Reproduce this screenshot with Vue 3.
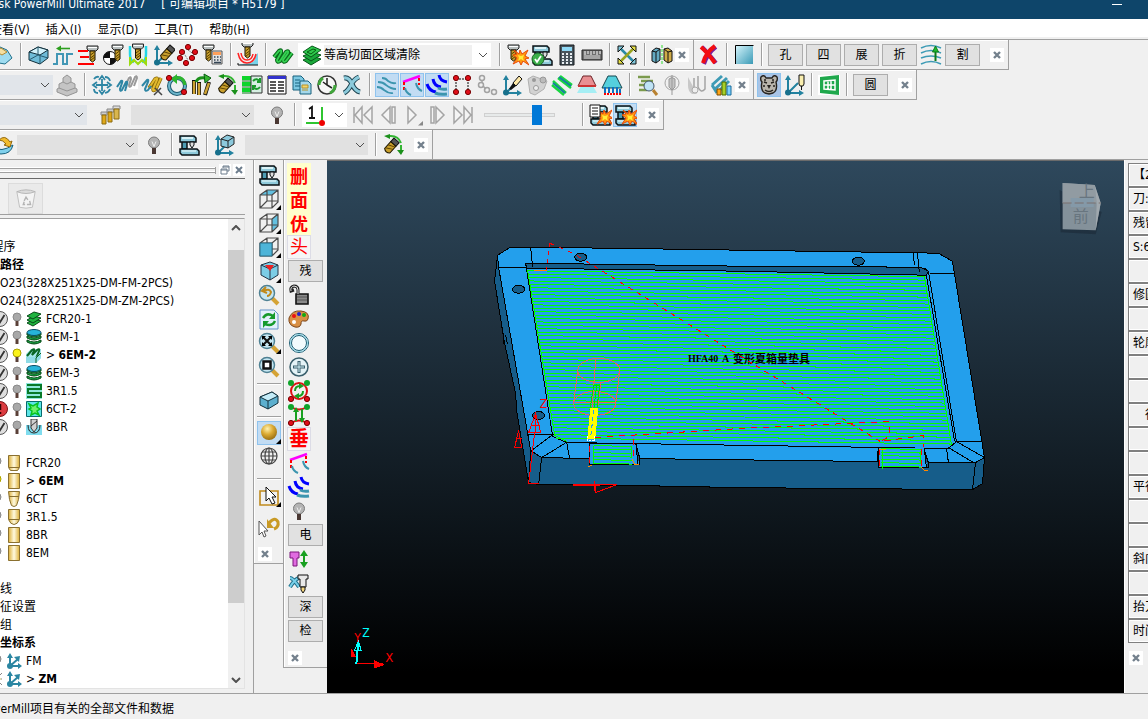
<template>
  <div class="window">
    <header class="title-bar">
      <span>Autodesk PowerMill Ultimate 2017</span>
      <span class="title-project">[ 可编辑项目 * H5179 ]</span>
      <button type="button" class="minimize" aria-label="最小化"></button>
    </header>

    <nav class="menu-bar">
      <button v-for="menu in menus" :key="menu" type="button">{{ menu }}</button>
    </nav>

    <div v-for="(row, r) in toolbarRows" :key="r" class="toolbar-row">
      <div v-for="(bar, b) in row" :key="b" class="toolbar">
        <template v-for="(item, i) in bar" :key="i">
          <button
            v-if="item.icon"
            type="button"
            class="tool"
            :class="{ 'is-on': item.on }"
            :aria-label="item.icon"
          >
            <svg viewBox="0 0 24 24" v-html="icons[item.icon]"></svg>
          </button>
          <i v-else-if="item.sep" class="sep"></i>
          <i v-else-if="item.space !== undefined" :style="{ width: `${item.space}px` }"></i>
          <button v-else-if="item.text" type="button" class="text-tool">{{ item.text }}</button>
          <button v-else-if="item.close" type="button" class="close" aria-label="关闭">
            <svg viewBox="0 0 14 14" v-html="closeMark"></svg>
          </button>
          <input
            v-else-if="item.slider"
            v-model="speed"
            type="range"
            class="slider"
            aria-label="仿真速度"
          />
          <div
            v-else
            class="combo"
            :class="`combo-${item.combo}`"
            :style="{ width: `${item.width}px` }"
          >
            <svg v-if="item.mark" class="combo-mark" viewBox="0 0 24 24" v-html="icons[item.mark]"></svg>
            <select :aria-label="item.name">
              <option>{{ item.value }}</option>
            </select>
            <svg class="chevron" viewBox="0 0 10 6"><path d="M1 1l4 4 4-4" /></svg>
          </div>
        </template>
      </div>
    </div>

    <main class="workspace">
      <aside class="explorer">
        <div class="explorer-head">
          <i class="grip"></i>
          <button type="button" class="dock" aria-label="浮动">
            <svg viewBox="0 0 12 12">
              <path d="M4 4v-2h6v5h-2M4 3h6M2 5h6v5h-6zM2 6h6" />
            </svg>
          </button>
          <button type="button" class="dock" aria-label="关闭">
            <svg viewBox="0 0 12 12"><path class="cross" d="M3 3l6 6M9 3l-6 6" /></svg>
          </button>
        </div>
        <div class="explorer-tools">
          <button type="button" class="bin-button" aria-label="回收站">
            <svg viewBox="0 0 24 24">
              <path d="M2 4l3 17q7 2 14 0l3-17" fill="#f4f4f4" stroke="#bcbcbc" />
              <path d="M2 4q10-4 20 0q-10 4-20 0z" fill="#dcdcdc" stroke="#b4b4b4" />
              <path d="M10 14l2-4 2 3M16 14l1 4h-4M11 18h-2l1-3" fill="none" stroke="#b4b4b4" stroke-width="1.500" />
            </svg>
          </button>
        </div>
        <div class="tree-frame">
          <ul class="tree">
            <li v-for="(node, n) in tree" :key="n" :class="node.kind">
              <svg v-if="node.status" class="status-mark" viewBox="0 0 16 16" v-html="marks[node.status]"></svg>
              <svg v-if="node.bulb" class="bulb-mark" viewBox="0 0 10 16" v-html="marks[node.bulb]"></svg>
              <svg v-if="node.mark" class="node-mark" viewBox="0 0 16 16" v-html="marks[node.mark]"></svg>
              <span v-if="node.active">&gt; <b>{{ node.label }}</b></span>
              <span v-else>{{ node.label }}</span>
            </li>
          </ul>
          <div class="scrollbar">
            <button type="button" class="scroll-up" aria-label="向上">
              <svg viewBox="0 0 10 6"><path d="M1 5l4-4 4 4" /></svg>
            </button>
            <i class="scroll-thumb"></i>
            <i class="scroll-rest"></i>
            <button type="button" class="scroll-down" aria-label="向下">
              <svg viewBox="0 0 10 6"><path d="M1 1l4 4 4-4" /></svg>
            </button>
          </div>
        </div>
      </aside>

      <div class="side-bars">
        <div v-for="(bar, b) in sideBars" :key="b" class="side-bar" :class="`side-${b}`">
          <template v-for="(item, i) in bar" :key="i">
            <button
              v-if="item.icon"
              type="button"
              class="tool"
              :class="{ 'is-on': item.on }"
              :aria-label="item.icon"
            >
              <svg viewBox="0 0 24 24" v-html="icons[item.icon]"></svg>
            </button>
            <button
              v-else-if="item.glyph"
              type="button"
              class="glyph-tool"
              :class="item.tone"
            >{{ item.glyph }}</button>
            <i v-else-if="item.sep" class="sep-line"></i>
            <i v-else-if="item.space" :style="{ height: `${item.space}px` }"></i>
            <button v-else-if="item.text" type="button" class="text-tool">{{ item.text }}</button>
            <button v-else type="button" class="close" aria-label="关闭">
              <svg viewBox="0 0 14 14" v-html="closeMark"></svg>
            </button>
          </template>
        </div>
      </div>

      <section class="viewport">
        <svg class="scene" viewBox="327 161 797 531" preserveAspectRatio="xMidYMid slice">
          <g shape-rendering="crispEdges" stroke="#000" stroke-width="1" fill="none">
            <!-- dark sides of the plate -->
            <path
              d="M498 255L495 281L505 343L516 393L517 410L529 482L539 484L640 485L740 487L972 489L982 483L984 457L952 300z"
              fill="#165d8a"
            />
            <!-- top face -->
            <path
              d="M498 255L511 247L607 248L938 253L952 261L984 457L975 462L928 462L923 447L878 447L877 461L640 458L636 443L590 443L590 458L542 457L531 450L499 267z"
              fill="#239fec"
            />
            <path d="M531 450L529 482M542 457L539 484M975 462L972 489" />
            <!-- pocket -->
            <path d="M526 263L553 264L740 266L900 267L925 268L928 271L956 441L948 448L567 442L553 436z" fill="#239fec" />
            <path d="M526 263L740 266L920 267L928 271L926 275L740 271L527 268z" fill="#165d8a" />
            <path d="M926 275L954 440" />
            <path d="M531 247L533 267M499 267H526M913 253L914 265M917 253L919 272M930 273H954" />
            <path d="M527 434H553L532 450M565 443L542 457M567 442L570 458M955 441H982M956 441L984 457M948 447L973 462M946 447L948 462" />
            <!-- clamp slots -->
            <path d="M590 443H636L639 463L590 464z" fill="#239fec" stroke="none" />
            <path d="M590 444V464H640V458M636 443L638 463" />
            <path d="M878 447H923L927 467L878 467z" fill="#239fec" stroke="none" />
            <path d="M878 447V467H928V462M924 448L926 467" />
            <path d="M506 335l2 9M504 333v11" />
            <ellipse v-for="hole in holes" :key="hole.x" :cx="hole.x" :cy="hole.y" rx="6" ry="4" fill="#165d8a" />
          </g>

          <g shape-rendering="crispEdges" stroke="#0f0" stroke-width="1" fill="none">
            <path :d="rasterPath" />
            <path d="M528 270L555 435L567 441M924 276L951 444" />
            <path :d="slotPath" />
          </g>

          <text class="engraving latin" x="688" y="362">HFA40</text>
          <text class="engraving latin" x="722" y="362">A</text>
          <text class="engraving" x="733" y="363">变形夏箱量垫具</text>

          <g shape-rendering="crispEdges" fill="none" stroke="#f00">
            <path stroke-dasharray="4 4" d="M550 243L547 270" />
            <path stroke-dasharray="5 5" d="M550 243L575 254L757 366L880 441" />
            <path stroke-dasharray="6 6" d="M595 437L740 428L889 421V436L880 441L923 435V446" />
            <path stroke-dasharray="6 5" d="M590 445V462M634 438V457M879 448V466M921 448V466" />
            <path stroke="#f80" d="M534 270H547M632 458l3 6h4M588 466l4-1M879 449h7M921 467l3 3h4" />
          </g>

          <!-- cutter with its holder -->
          <g shape-rendering="crispEdges" fill="none">
            <g stroke="#dd6a5c">
              <ellipse cx="599" cy="370" rx="21" ry="12" />
              <ellipse cx="595" cy="403" rx="21" ry="12" />
              <path d="M578 370L574 402M620 370L616 402M596 358L592 415M575 402H616M601 382L597 415" />
            </g>
            <path stroke="#0d0" d="M594 385L590 410M600 384L597 410M597 384L594 410M594 385H600" />
            <path fill="#ff0" stroke="#ff0" d="M591 408H598L595 438H588z" />
            <path stroke="#fff" stroke-dasharray="2 1" d="M588 435V440H595V435" />
            <path stroke="#239fec" stroke-dasharray="4 3" d="M594 410L591 436" />
          </g>

          <!-- workplane axes -->
          <g shape-rendering="crispEdges" fill="none" stroke="#f00">
            <path d="M536 413L529 432H541zM536 413V432M531 425H540M535 432L529 483H539" />
            <path d="M519 430L515 447H522zM516 438H522" />
            <path d="M573 484H617L596 492L595 480M595 484V490" />
            <path d="M573 484H600" stroke-width="2" />
          </g>
          <text class="axis red" x="540" y="408">Z</text>

          <!-- view triad -->
          <g shape-rendering="crispEdges" fill="none">
            <path stroke="#f00" d="M357 663H384" />
            <path fill="#f00" stroke="#f00" d="M375 660L384 664L375 667zM352 648l4 8h-4z" />
            <path stroke="#0ff" stroke-width="2" d="M357 663L359 642" />
            <path stroke="#0ff" d="M359 640L355 650H362z" />
          </g>
          <text class="axis cyan" x="363" y="636">Z</text>
          <text class="axis red" x="355" y="641">Y</text>
          <text class="axis red wide" x="386" y="661">X</text>

          <!-- view cube -->
          <g>
            <path d="M1059 190L1060 232L1095 234L1101 212z" fill="#101b24" opacity=".35" />
            <path d="M1062 183L1094 185L1100 203L1095 230L1062 229z" fill="#84919a" />
            <path d="M1062 183L1094 185L1096 203H1062z" fill="#919ba2" />
            <path d="M1094 185L1100 203L1095 230L1096 203z" fill="#a0a8ae" />
            <path d="M1070 198h23v9h-23z" fill="#8499a8" />
            <path d="M1062 203h38" stroke="#7a716e" stroke-dasharray="9 3" />
            <text class="cube-text" x="1078" y="197">上</text>
            <text class="cube-text" x="1072" y="222">前</text>
          </g>
        </svg>
      </section>

      <aside class="macro-panel">
        <div class="macro-list">
          <button v-for="(macro, m) in macros" :key="m" type="button">{{ macro }}</button>
        </div>
        <button type="button" class="close" aria-label="关闭">
          <svg viewBox="0 0 14 14" v-html="closeMark"></svg>
        </button>
      </aside>
    </main>

    <footer class="status-bar">PowerMill项目有关的全部文件和数据</footer>
  </div>
</template>

<script setup>
import { ref } from 'vue'

const speed = ref(79)

const menus = ['查看(V)', '插入(I)', '显示(D)', '工具(T)', '帮助(H)']

const closeMark = '<path d="M4 4l6 6M10 4l-6 6" stroke="#74818d" stroke-width="2.400"/>'

// shared fragments
const cutter = (x, y) => `<g transform="translate(${x} ${y})">
  <path d="M0 0h11v3l-2 2h-7l-2-2z" fill="#b9c0c0" stroke="#222"/>
  <path d="M1 1.500h9" stroke="#fff"/>
  <path d="M3 5h5v9l-2.500 2-2.500-2z" fill="#c99f2c" stroke="#1a1400"/>
  <path d="M3.500 9l4-3M3.500 12l4-3M4 14l4-3" stroke="#5a4200"/></g>`
const tilted = (x, y) => `<g transform="translate(${x} ${y}) rotate(42)">
  <path d="M0 0h7v5h-7z" fill="#555" stroke="#111"/>
  <path d="M0 5h7v9q-3.500 3-7 0z" fill="#c99f2c" stroke="#1a1400"/>
  <path d="M0 9l7-3M0 13l7-4" stroke="#5a4200"/></g>`
const axes = `<path d="M6 20V5M5 20h15M6 20l10-10" stroke="#23829f" stroke-width="2" fill="none"/>
  <path d="M6 2l3 5h-6zM22 20l-5-3v6z" fill="#23829f"/><circle cx="6" cy="19.500" r="3" fill="#17708c"/>`
const waveLine = 'M3 13L8 7q3-2 2 2L6 16q0 3 3 1L15 8q3-2 2 1L12 16q0 3 3 1L21 9'
const wave = (color) => `<path d="${waveLine}" fill="none" stroke="${color}" stroke-width="2"/>`
const flame = (x, y) => `<g transform="translate(${x} ${y})"><path d="M-2-2l5 4 1-4 2 4 6-4-3 6 4 2-4 1 4 6-6-4-2 4-2-4-6 3 4-6-4-3 4-1z" fill="#ff9a10" stroke="#e8480a"/><path d="M2 3l3 1 3-1-1 3 1 3-3-2-3 2 1-3z" fill="#ffec3a"/></g>`
const machine = `<path d="M5 7h5v9h-5z" fill="#4d9cb3" stroke="#0a1114" stroke-width="1.500"/>
  <path d="M3 3h14l2 2v4h-16z" fill="#8fcadb" stroke="#0a1114" stroke-width="1.500"/>
  <path d="M5 5h11" stroke="#f4ffff" stroke-width="1.500"/>
  <path d="M13 9h4v3l-2 3-2-3z" fill="#ddd" stroke="#0a1114"/>
  <path d="M3 16h17l2 2v4h-17l-2-2z" fill="#8fcadb" stroke="#0a1114" stroke-width="1.500"/>
  <path d="M5 18h14" stroke="#f4ffff"/>`
const bulbGrey = `<circle cx="12" cy="9.500" r="5.500" fill="#b4b4b4" stroke="#7c7c7c"/><path d="M10 8.500l2 5 2-5" stroke="#eee" fill="none"/><path d="M10 15h4v6h-4z" fill="#4a3833"/>`
const cubeLines = '<path d="M3 8l7-5h11v12l-6 6h-12zM3 8h12v13M15 8l6-5M10 3v11l-7 7M10 14h11" fill="none" stroke="#4a4a4a" stroke-width="1.200"/>'
const magnifier = `<path d="M14 14l7 7" stroke="#d5a335" stroke-width="4"/><circle cx="10" cy="10" r="7.500" fill="#c5e6f2" stroke="#4f8193" stroke-width="1.500"/>`
const redDots = (points) => points.map(([x, y]) => `<circle cx="${x}" cy="${y}" r="2.600" fill="#e00d18" stroke="#700"/>`).join('')

const icons = {
  model: '<path d="M2 8l7-4 7 3 5 8-7 6-12-2z" fill="#9fdcf0" stroke="#1f6f8a"/><path d="M4 8l6-3 6 4-5 3z" fill="#f5dfa0" stroke="#b58a30"/>',
  block: '<path d="M3 9l9-5 10 3v8l-8 6-11-4z" fill="#6fbcd8" stroke="#12303c"/><path d="M3 9l11 3 8-5-10-3z" fill="#d2f2fb" stroke="#12303c"/><path d="M14 12v9M12 4v8l-9 5M12 12l10 3" fill="none" stroke="#275a6e"/>',
  rapid: '<path d="M2 21h4v-10h6v10h4v-10h6" fill="none" stroke="#4297b5" stroke-width="2"/><path d="M9 5.500h10" stroke="#2c9f1e" stroke-width="1.600"/><path d="M5 5.500l5-3v6z" fill="#2c9f1e"/>',
  feeds: `<path d="M2 8h10M4 14h9M2 21h16" stroke="#f00" stroke-width="2"/>${cutter(11, 3)}`,
  startPoint: `<circle cx="9" cy="15" r="6.500" fill="#fff" stroke="#111"/><path d="M9 15V8.500a6.500 6.500 0 0 0-6.500 6.500zM9 15v6.500a6.500 6.500 0 0 0 6.500-6.500z" fill="#111"/>${cutter(11, 2)}`,
  leads: `<path d="M4 3v15M20 3v15" stroke="#f22" stroke-width="1.500"/><path d="M4 3v8q0 7 4 8M20 3v8q0 7-4 8" fill="none" stroke="#23d6e8" stroke-width="2.500"/><path d="M4 14v7l4-4 4 4 4-4 4 4v-7" fill="none" stroke="#9bdc10" stroke-width="2"/>${cutter(6.500, 1)}`,
  toolAxis: `${axes}${tilted(19, 2)}`,
  points: `<path d="M6 7l6 10M12 7l7 5" stroke="#777" stroke-dasharray="2 1"/><g>${redDots([[12, 4], [6, 9], [19, 9], [4, 15], [10, 20], [16, 15]])}</g>`,
  toolCalc: `${cutter(2, 2)}<path d="M11 8h10v13h-10z" fill="#e3e3e3" stroke="#555"/><path d="M12 9h8v3h-8z" fill="#ffa05a"/><path d="M13 14h1.500M16 14h1.500M19 14h1M13 17h1.500M16 17h1.500M19 17h1M13 19.500h7" stroke="#345" stroke-width="1.500"/>`,
  toolpathCheck: `<path d="M13 20q7-1 6-7l3-3v12h-20z" fill="#78d3ea"/><path d="M2 10q2 10 9 10t9-9M5 10q1 7 6 7t6-6" fill="none" stroke="#f22" stroke-width="1.500"/><path d="M2 20v2h20" stroke="#111" fill="none"/>${cutter(6, -1)}`,
  greenWave: `<path d="${waveLine}" transform="translate(0 1)" fill="none" stroke="#0b6a1c" stroke-width="4"/><path d="${waveLine}" transform="translate(0 1)" fill="none" stroke="#35d252" stroke-width="1.800"/>`,
  layers: '<g stroke="#07551a" fill="#1aa93a"><path d="M3 17l8 5 10-6-9-3z"/><path d="M3 13l8 5 10-6-9-3z"/><path d="M3 9l8 5 10-7-9-4z" fill="#2ec94c"/></g><path d="M7 9l6-3 3 1-5 4z" fill="none" stroke="#075c12"/>',
  toolCollide: `${cutter(3, 2)}${flame(11, 9)}`,
  machineOk: `${machine}<circle cx="8" cy="16" r="6" fill="#3caf4a" stroke="#186a24"/><path d="M5 16l2 3 4-6" fill="none" stroke="#fff" stroke-width="1.800"/>`,
  calculator: '<path d="M5 2h14v20h-14z" fill="#49545c" stroke="#15191c"/><path d="M7 4h10v4h-10z" fill="#8fd8f5"/><path d="M7 11h2M11 11h2M15 11h2M7 14h2M11 14h2M15 14h2M7 17h2M11 17h2M15 17h2M7 20h2M11 20h2M15 20h2" stroke="#e8eef2" stroke-width="2"/>',
  ruler: '<path d="M2 7h20v10h-20z" fill="#6f6f6f" stroke="#222"/><path d="M4 12h16v4h-16z" fill="#a5a5a5"/><path d="M5 8v4M8 8v3M11 8v4M14 8v3M17 8v4M20 8v3" stroke="#fff"/>',
  expand: '<path d="M5 5l14 14" stroke="#2b8aa4" stroke-width="2.500"/><path d="M19 5l-14 14" stroke="#9ba520" stroke-width="2.500"/><path d="M3 3h6l-6 6zM21 21h-6l6-6z" fill="#7fc5d8" stroke="#111"/><path d="M21 3h-6l6 6zM3 21h6l-6-6z" fill="#e6df45" stroke="#111"/>',
  mirror: '<path d="M2 8l4-3 4 1v11l-4 3-4-2z" fill="#63aac2" stroke="#111"/><path d="M2 8l4 1 4-3M6 9v11" stroke="#111" fill="none"/><path d="M22 8l-4-3-4 1v11l4 3 4-2z" fill="#d0ac48" stroke="#111"/><path d="M22 8l-4 1-4-3M18 9v11" stroke="#111" fill="none"/><path d="M12 2v20" stroke="#3d3" stroke-dasharray="3 1"/>',
  redCross: '<path d="M5 4q6 6 14 16M19 4q-8 6-12 17" stroke="#7a1fa0" stroke-width="4" fill="none"/><path d="M4 4q6 5 14 16M18 3q-9 6-12 17" stroke="#f20d12" stroke-width="4" fill="none"/>',
  plane: '<defs><linearGradient id="plane" x1="0" y1="0" x2="1" y2="1"><stop offset="0" stop-color="#d3f3fa"/><stop offset="1" stop-color="#3a9ab6"/></linearGradient></defs><path d="M4 3h17v18h-17z" fill="url(#plane)"/><path d="M3.500 21v-18.500h18" fill="none" stroke="#000"/>',
  surface: '<path d="M2 5q10-5 20 0M2 10q10-5 20 0M2 15q10-4 20 0M2 21q10-5 20 0" fill="none" stroke="#3d9bb5" stroke-width="1.600"/><path d="M16.500 18v-11" stroke="#0a7a18" stroke-width="2"/><path d="M16.500 3l3 6h-6z" fill="#1dbb2f" stroke="#0a7a18"/>',
  pyramid: '<g fill="#c4c4c4" stroke="#949494"><path d="M2 16l10-5 10 5v3l-10 4-10-4z"/><path d="M4 11l8-4 8 4v4l-8 3-8-3z"/><path d="M8 5l4-3 4 3v4l-4 2-4-2z"/></g>',
  transform: '<g fill="none" stroke="#2e86a4" stroke-width="1.800"><path d="M12 6v12M6 12h12M9 7l3-4 3 4M9 17l3 4 3-4M7 9l-4 3 4 3M17 9l4 3-4 3"/><path d="M4 6q2-3 5-2M15 4q4 0 5 4M4 16q0 4 4 4M15 20q4-1 5-4"/></g>',
  waveCopy: '<path d="M13 2h10v14h-10z" fill="#fff"/><path d="M10 13l4-8q2-2 2 1l-2 6q0 3 2 1l4-9q2-2 2 1l-3 8" fill="none" stroke="#9a9a9a" stroke-width="2"/><path d="M2 14l4-6q2-1 1 2l-2 6q0 3 2 1l4-8q2-1 1 2l-2 7" fill="none" stroke="#2e86a4" stroke-width="2"/>',
  waveCut: '<path d="M9 15l6-9q3-2 2 1l-4 9q0 3 3 0l5-11" fill="none" stroke="#8a6a08" stroke-width="3.500"/><path d="M9 15l6-9q3-2 2 1l-4 9q0 3 3 0l5-11" fill="none" stroke="#e3ba2f" stroke-width="2"/><path d="M2 13l5-6q2-1 1 2l-3 7q0 3 3 1l3-4" fill="none" stroke="#2e86a4" stroke-width="2"/><path d="M15 15l7 7M21 15l-7 7" stroke="#444" stroke-width="1.500"/>',
  reorder: `<circle cx="12" cy="13" r="8" fill="none" stroke="#1d5a70" stroke-width="4"/><circle cx="12" cy="13" r="8" fill="none" stroke="#6cb6cc" stroke-width="2"/><path d="M10 6q8-4 10 6" fill="none" stroke="#2cb52c" stroke-width="3"/><path d="M12 1v10l-6-5z" fill="#2cb52c"/>${redDots([[4, 5], [19, 19]])}`,
  reverseTool: '<path d="M4 7v14M9 9v13M19 9l-4 13" stroke="#111" stroke-width="4"/><path d="M4 8v13M9 10v12M19 10l-4 11" stroke="#cda233" stroke-width="2.500"/><path d="M6 9q2-5 9-4" fill="none" stroke="#1b901b" stroke-width="3"/><path d="M14 1l7 4-6 5z" fill="#35b52f" stroke="#075c12"/>',
  spinTool: `${tilted(13, 5)}<path d="M8 3q9-1 12 7M20 12v6" fill="none" stroke="#34b534" stroke-width="2"/><path d="M3 3l6-2v5zM16 17h7l-3 5z" fill="#1b901b"/>`,
  refreshPath: '<path d="M2 5h13M2 11h13M2 17h13" stroke="#0fd42c" stroke-width="4"/><path d="M2 8h9M2 14h9M2 20h9" stroke="#0b7f1d"/><path d="M11 3h11v17h-11z" fill="#d6efe2" stroke="#333"/><path d="M13 8q4-4 7 1M20 14q-3 4-7 0M20 5v4h-3M13 17v-4h3" fill="none" stroke="#1a9a2c" stroke-width="2"/>',
  list: '<path d="M3 3h18v18h-18z" fill="#fff" stroke="#111"/><path d="M3 4.500h18" stroke="#33c" stroke-width="3"/><path d="M5 9h6M13 9h6M5 12h6M13 12h6M5 15h6M13 15h6M5 18h6M13 18h6" stroke="#222" stroke-width="1.500"/>',
  copy: '<path d="M3 3h8l3 3v11h-11z" fill="#7cc8e2" stroke="#16607c"/><path d="M5 7h5M5 10h5M5 13h5" stroke="#16607c"/><path d="M10 8h8l3 3v10h-11z" fill="#a5d8ea" stroke="#16607c"/><path d="M12 12h6v3h-6zM12 17h6" fill="#f2d56b" stroke="#b8922b"/>',
  clock: '<circle cx="12" cy="12" r="9" fill="#f6f6f6" stroke="#333" stroke-width="1.500"/><path d="M12 5v7l5 3M12 12l-4-3" fill="none" stroke="#222" stroke-width="1.500"/><path d="M4 12a9 9 0 0 1 4-7M20 12a9 9 0 0 1-5 8" fill="none" stroke="#3fa53a" stroke-width="3"/>',
  deleteX: '<path d="M4 5q5-1 8 6t8 8M19 4q-5 2-8 8t-7 8" fill="none" stroke="#193f4c" stroke-width="5"/><path d="M4 5q5-1 8 6t8 8M19 4q-5 2-8 8t-7 8" fill="none" stroke="#8ccbdc" stroke-width="3"/>',
  curves: '<path d="M2 14q4 0 7 3 5 4 9 3M3 9q5 0 8 3 5 4 10 4M7 5q4 0 6 3 4 3 8 2" fill="none" stroke="#3c95af" stroke-width="1.800"/>',
  leadLinks: '<path d="M3 9l17-6" stroke="#f0f" stroke-width="2.500"/><path d="M4 9v9M19 5v7" stroke="#f00" stroke-width="2" stroke-dasharray="3 2"/><path d="M5 15q1 5 6 7M16 10q1 6 6 8" fill="none" stroke="#3c95af" stroke-width="2"/>',
  arcs: '<path d="M2 11q2 7 9 8M8 6q1 7 8 8M14 2q1 6 8 7" fill="none" stroke="#00f" stroke-width="3"/><path d="M10 20q5 2 12 1M13 15q4 2 9 1" fill="none" stroke="#3c95af" stroke-width="3"/>',
  fourPoints: `<path d="M6 6h12M6 6v12M18 6v12" stroke="#555" stroke-width="1.500" stroke-dasharray="2 1"/>${redDots([[6, 5], [18, 5], [6, 19], [18, 19]])}`,
  chain: '<g fill="none" stroke="#a2a2a2" stroke-width="1.500"><circle cx="7" cy="5" r="2.500"/><circle cx="6" cy="12" r="2.500"/><circle cx="12" cy="17" r="2.500"/><circle cx="19" cy="19" r="2.500"/><path d="M7 7v3M8 13l3 3"/></g>',
  axisEdit: `${axes}<path d="M13 10l6-7 3 3-6 7z" fill="#ffe9a8" stroke="#111"/><path d="M9 16l4-6 3 3-5 4z" fill="#111"/>`,
  fan: '<path d="M3 6l5-3 14 5-3 8-9 6-5-2z" fill="#d2d2d2" stroke="#b0b0b0"/><circle cx="9" cy="7" r="2" fill="#999"/><circle cx="18" cy="7" r="3" fill="#bbb" stroke="#999"/><circle cx="11" cy="15" r="2.500" fill="#eee" stroke="#999"/>',
  greenBars: '<path d="M3 8l13 12M10 3l12 9M2 12l12 10M8 5l13 10" stroke="#18d640" stroke-width="2.500"/><path d="M3 10l12 10M9 4l12 9" stroke="#187fa0" stroke-width="2"/>',
  redTrap: '<path d="M6 13h12l4 7h-20z" fill="#a5eef4"/><path d="M8 3h8l5 10h-18z" fill="#e88f92" stroke="#6b2226"/><path d="M3 13h18" stroke="#c33" stroke-width="2"/>',
  blueTrap: '<path d="M8 3h8l6 12h-20z" fill="#55d0dd" stroke="#17464f"/><path d="M5 14v6M9 14v6M13 14v6M17 14v6M20 16v4" stroke="#0a71c2" stroke-width="2"/><path d="M4 21h17" stroke="#f00" stroke-width="2" stroke-dasharray="2 1"/>',
  searchPath: '<path d="M3 4h12M6 8h12M4 12h8M4 17h8" stroke="#7b9a4d" stroke-width="2.500"/><circle cx="14" cy="13" r="5" fill="#bfe3f5" stroke="#456"/><path d="M18 17l4 5" stroke="#b88130" stroke-width="3"/>',
  gauge: '<circle cx="12" cy="10" r="7" fill="none" stroke="#a5a5a5"/><path d="M12 2v20M9 6q3-3 6 0v8l-3 3-3-3z" fill="#c4c4c4" stroke="#999"/>',
  limits: '<path d="M3 4l9 17h-5q-4-3-4-8z" fill="#c8c8c8"/><path d="M9 5v12M13 3v11q3 7 7 2v-13" fill="none" stroke="#a4a4a4" stroke-width="1.500"/><circle cx="10" cy="17" r="3" fill="#eee" stroke="#aaa"/>',
  stats: '<path d="M2 12l10-9M5 16l12-11M10 17l9-9M2 12l5 8" stroke="#3d9bb5" stroke-width="3"/><path d="M7 16h4v6h-4z" fill="#ffa61b" stroke="#7a4a00"/><path d="M12 9h4v13h-4z" fill="#a6d02a" stroke="#4f6b00"/><path d="M17 13h4v9h-4z" fill="#7cd1ff" stroke="#176a9a"/>',
  bear: '<path d="M1 1h22v22h-22z" fill="#a9c4e6"/><path d="M4 4q3-3 5 1h6q2-4 5-1 1 3-1 5 2 8-3 11l-4 1-4-1q-5-3-3-11-2-2-1-5z" fill="#b9b5ac" stroke="#26231f" stroke-width="1.400"/><path d="M7 9l3 1M17 9l-3 1M8 17q4 3 8 0M6 13h2M16 13h2M8 6v2M16 6v2" stroke="#26231f" fill="none" stroke-width="1.500"/><path d="M10 12h4l-2 4z" fill="#26231f"/>',
  axisTool: `${axes}<path d="M17 2h5v9l-1 2h-3l-1-2z" fill="#f8edae" stroke="#111"/><path d="M19.500 13v4" stroke="#111"/>`,
  sheet: '<path d="M1 2h22v20h-22z" fill="#fff"/><path d="M3 4l19-2v20l-19-2z" fill="#1fa84c"/><path d="M7 8l11-1v10l-11-1zM7 12h11M11 8v8M14 7v10" fill="none" stroke="#fff" stroke-width="1.500"/>',
  toolSet: '<path d="M2 9h6v3h-6z" fill="#ccc" stroke="#888"/><path d="M3 12h4v9h-4z" fill="#e0a818" stroke="#8a6a10"/><path d="M8 6h7v3h-7z" fill="#ccc" stroke="#888"/><path d="M9 9h4v10h-4z" fill="#e0a818" stroke="#8a6a10"/><path d="M14 3h7v3h-7z" fill="#ddd" stroke="#888"/><path d="M15 6h5v10h-5z" fill="#d9b64e" stroke="#8a6a10"/>',
  bulb: bulbGrey,
  numAxis: '<path d="M4 20h13M20 4v14" stroke="#2fc530" stroke-width="2"/><circle cx="20" cy="20" r="3" fill="#e00"/><path d="M7 6l3-2v11M7 15h6" fill="none" stroke="#111" stroke-width="1.800"/>',
  toStart: '<path d="M3 4v16M11 4l-7 8 7 8zM21 4l-8 8 8 8z" fill="#f4f4f4" stroke="#a4a4a4" stroke-width="1.500"/>',
  stepBack: '<path d="M14 4l-8 8 8 8zM16 4h3v16h-3z" fill="#f4f4f4" stroke="#a4a4a4" stroke-width="1.500"/>',
  play: '<path d="M7 4l8 8-8 8z" fill="#f4f4f4" stroke="#a4a4a4" stroke-width="1.500"/><path d="M22 18v4.500h-5z" fill="#888"/>',
  stepOn: '<path d="M5 4h3v16h-3zM10 4l8 8-8 8z" fill="#f4f4f4" stroke="#a4a4a4" stroke-width="1.500"/>',
  toEnd: '<path d="M3 4l8 8-8 8zM13 4l7 8-7 8zM21 4v16" fill="#f4f4f4" stroke="#a4a4a4" stroke-width="1.500"/>',
  docFire: `${machine}${flame(12, 9)}<path d="M2 2h10v12h-10z" fill="#fff" stroke="#111"/><path d="M4 5h6M4 8h6M4 11h6" stroke="#111"/>`,
  machineFire: `${machine}${flame(12, 9)}`,
  swoosh: '<path d="M2 14q8 6 20-2-2 9-12 9-7 0-8-7z" fill="#7fd0ec" stroke="#16607c"/><path d="M8 7q6-6 11 2l2-1-2 6-6-2 2-1q-3-4-7-4z" fill="#f1bb2e" stroke="#94690c"/>',
  machine,
  axisBlock: `${axes}<path d="M9 6l6-4 7 2v7l-6 4-7-2z" fill="#8cc9dc" stroke="#222"/><path d="M9 6l7 2 6-4M16 8v7" fill="none" stroke="#222"/>`,
  viewTop: `<path d="M3 8l7-5h11l-6 5z" fill="#63c0e0"/>${cubeLines}<path d="M24 18v5h-5z"/>`,
  viewRight: `<path d="M15 8l6-5v12l-6 6z" fill="#63c0e0"/>${cubeLines}<path d="M24 18v5h-5z"/>`,
  viewFront: `${cubeLines}<path d="M3 8h12v13h-12z" fill="#4db4d8" stroke="#2a6f88"/><path d="M24 18v5h-5z"/>`,
  viewIso: '<path d="M4 6l9-3 8 3v10l-8 5-9-5z" fill="#7ccde6" stroke="#234"/><path d="M4 6l9 4 8-4M13 10v11" fill="none" stroke="#234"/><path d="M8 6h9l-4 6z" fill="#e22"/><path d="M24 19v5h-5z"/>',
  zoomBack: `${magnifier}<path d="M7 8q5-3 7 1-1 4-4 4M9 4l-4 4 5 2" fill="none" stroke="#c08a1c" stroke-width="2"/>`,
  refresh: '<path d="M3 3h14l4 4v15h-18z" fill="#e2f0fb" stroke="#6593c8"/><path d="M6 11q4-6 10-2M18 14q-3 6-10 3" fill="none" stroke="#159a2b" stroke-width="2.500"/><path d="M18 5v7h-6zM6 21v-7h6z" fill="#159a2b"/>',
  zoomFit: `${magnifier}<path d="M6 6l8 8M14 6l-8 8" stroke="#111" stroke-width="2"/><path d="M5 5h4l-4 4zM15 5h-4l4 4zM5 15h4l-4-4zM15 15h-4l4-4z"/><path d="M24 18v5h-5z"/>`,
  zoomBox: `${magnifier}<path d="M6.500 6.500h7v7h-7z" fill="#fff" stroke="#111" stroke-width="2.500"/>`,
  blockView: '<path d="M3 9l12-5 6 4v7l-10 6-8-4z" fill="#5cafce" stroke="#12303c"/><path d="M3 9l8 4 10-5-6-4z" fill="#c4ecf8" stroke="#12303c"/><path d="M11 13v8" stroke="#12303c"/>',
  sphere: '<defs><radialGradient id="ball" cx=".4" cy=".3" r=".7"><stop offset="0" stop-color="#fff2b0"/><stop offset=".5" stop-color="#dcab35"/><stop offset="1" stop-color="#9c7114"/></radialGradient></defs><circle cx="12" cy="11" r="8" fill="url(#ball)"/><path d="M24 18v5h-5z"/>',
  globe: '<g fill="none" stroke="#444" stroke-width="1.200"><circle cx="12" cy="11" r="8"/><ellipse cx="12" cy="11" rx="4" ry="8"/><path d="M4 11h16M12 3v16M5 7h14M5 15h14"/></g>',
  selectBox: '<path d="M3 6h18v14h-18z" fill="none" stroke="#c08a1c" stroke-width="1.600"/><path d="M9 2v14l3-3 3 6 3-1-3-6h4z" fill="#fff" stroke="#111"/><path d="M24 17v5h-5z"/>',
  undoSelect: '<path d="M2 6v14l3-3 2 5 2-1-2-5h4z" fill="#fff" stroke="#555"/><path d="M12 8q6-7 9-1 1 5-4 7" fill="none" stroke="#c99a25" stroke-width="3"/><path d="M10 4v9h7z" fill="#c99a25"/>',
  unlock: '<path d="M9 11h12v10h-12z" fill="#8a8a8a" stroke="#111" stroke-width="1.600"/><path d="M11 11v-4q0-4-4-4-4 1-3 5l3-1" fill="none" stroke="#222" stroke-width="3"/><path d="M11 11v-4q0-4-4-4-4 1-3 5" fill="none" stroke="#ddd"/><path d="M10 14h10M10 17h10" stroke="#555"/>',
  palette: '<path d="M2 11q3-8 12-7 9 1 7 8-1 3-4 2-3-1-3 3-1 4-6 3-7-2-6-9z" fill="#d99045" stroke="#7b451a"/><circle cx="7" cy="9" r="2" fill="#e11"/><circle cx="12" cy="7" r="2" fill="#22c"/><circle cx="17" cy="8" r="2" fill="#1a1"/><circle cx="7" cy="15" r="2" fill="#fff"/>',
  ring: '<circle cx="12" cy="12" r="9.500" fill="#f3fbfd" stroke="#1f5f74"/><circle cx="12" cy="12" r="8.500" fill="none" stroke="#8fd6e6"/><circle cx="12" cy="12" r="7.500" fill="none" stroke="#1f5f74"/>',
  ringPlus: '<circle cx="12" cy="12" r="9" fill="#e4f3f7" stroke="#3a5f6c" stroke-width="1.500"/><path d="M12 6v12M6 12h12" stroke="#3a5f6c" stroke-width="3"/><path d="M12 7v10M7 12h10" stroke="#d4f4fa"/>',
  cycleGreen: `<circle cx="12" cy="12" r="8" fill="#f0f0f0" stroke="#d11" stroke-width="2"/><path d="M8 12q0-5 5-5M16 12q0 5-5 5" fill="none" stroke="#18a020" stroke-width="2"/><path d="M12 4l5 3-5 3zM12 14l-5 3 5 3z" fill="#18a020"/><g fill="#0da52a"><circle cx="4" cy="4" r="3"/><circle cx="20" cy="4" r="3"/></g>${redDots([[4, 20], [20, 20]])}`,
  swapGreen: `<path d="M4 4q8 5 16 0M4 20q8-5 16 0" fill="none" stroke="#d11" stroke-width="2"/><path d="M9 18v-10M15 6v10" stroke="#18a020" stroke-width="2"/><path d="M9 4l3 5h-6zM15 20l3-5h-6z" fill="#18a020"/><g fill="#0da52a"><circle cx="4" cy="4" r="3"/><circle cx="20" cy="4" r="3"/></g>${redDots([[4, 20], [20, 20]])}`,
  pinMove: '<path d="M3 5h9v6h-2v8h-4v-8h-3z" fill="#e06be0" stroke="#7a177a"/><path d="M17 8v8" stroke="#18a020" stroke-width="2"/><path d="M17 3l4 6h-8zM17 21l4-6h-8z" fill="#18a020"/>',
  xTool: '<path d="M3 7q3 0 9 9M12 7q-4 1-9 9" stroke="#1f6f8a" stroke-width="4" fill="none"/><path d="M3 7q3 0 9 9M12 7q-4 1-9 9" stroke="#78d0ea" stroke-width="2" fill="none"/><path d="M11 4h10v4h-2v8h-6v-8h-2z" fill="#e8e8e8" stroke="#111"/><path d="M14 16h4v3l-2 3-2-3z" fill="#f3d67e" stroke="#111"/>',
}

const treeBulb = (fill, edge) => `<circle cx="5" cy="6" r="4" fill="${fill}" stroke="${edge}"/><path d="M3.500 10h3v5h-3z" fill="#5a4038"/>`
const shank = (tip) => `<defs><linearGradient id="gold"><stop offset="0" stop-color="#dcaf38"/><stop offset=".5" stop-color="#fffae0"/><stop offset="1" stop-color="#dcaf38"/></linearGradient></defs><path d="${tip}" fill="url(#gold)" stroke="#8a7030"/>`
const disc = (y) => `<path d="M1 ${y}q7 4 14 0v2q-7 4-14 0z" fill="#19a344" stroke="#064a17"/>`

const marks = {
  ok: '<circle cx="8" cy="8" r="7.500" fill="#dedede" stroke="#555"/><path d="M4.500 8l3 4 5-8" fill="none" stroke="#333" stroke-width="1.800"/>',
  error: '<circle cx="8" cy="8" r="7.500" fill="#dc3b40" stroke="#7a1416"/><path d="M8 3v6M8 11v2" stroke="#300" stroke-width="2.500"/>',
  off: treeBulb('#a8a8a8', '#8a8a8a'),
  on: treeBulb('#fbf31a', '#a9a000'),
  ray: '<circle cx="4" cy="8" r="4" fill="#fbf31a" stroke="#a9a000"/><path d="M8 4l2-2M9 8h1M8 12l2 2" stroke="#888"/>',
  layers: '<g stroke="#064a17" fill="#1fb33f"><path d="M1 12l6 3 8-5-7-2z"/><path d="M1 9l6 3 8-5-7-2z"/><path d="M1 5l6 3 8-5-7-2z"/></g>',
  stack: `${disc(11)}${disc(7)}${disc(4)}<ellipse cx="8" cy="3.500" rx="7" ry="3" fill="#26b4da" stroke="#0a4a63"/>`,
  mesh: '<path d="M0 7l5-5h10v9l-5 5h-10z" fill="#a3e6ea"/><path d="M1 9l5-6q3-2 2 1l-2 4 5-5q3-2 2 1l-2 5h4" fill="none" stroke="#086523" stroke-width="2"/><path d="M0 10h10l5-4v5l-5 5h-10z" fill="#8fdbe6"/><path d="M10 16v-5l5-5" fill="none" stroke="#086523"/>',
  lines: '<path d="M0 0h16v16h-16z" fill="#8fe8dc"/><path d="M1 2h14v4h-13v4h13v4h-14" fill="none" stroke="#087a28" stroke-width="2"/>',
  star: '<path d="M.5.5h15v15h-15z" fill="#5de5e8" stroke="#086b70"/><path d="M3 3l4 2 5-3-1 4 3 2-3 2 2 4-4-2-4 2 1-4-3-2 2-1z" fill="#6df06a" stroke="#06c222" stroke-width="1.500"/>',
  drill: '<path d="M0 6h4l4 8 4-8h4v10h-16z" fill="#7fdcee"/><path d="M5 0h6v9l-3 4-3-4z" fill="#d0d0d0" stroke="#333"/><path d="M5 7l6-5" stroke="#333"/><path d="M2 6q0 8 6 8t6-8" fill="none" stroke="#222"/>',
  endMill: shank('M2.500 0.500h11v15h-11z'),
  tipMill: shank('M2.500 0.500h11v12l-2 3h-7l-2-3zM3 12.500h10'),
  taper: shank('M2.500 0.500h11l-1 8-2 6-2.500 1-2.500-1-2-6zM3 5.500h10'),
  ballMill: shank('M2.500 0.500h11v10q-2 5-5.500 5t-5.500-5zM3 10.500h10'),
  plane: '<path d="M4 14V4M3 13h10M4 13l8-7" stroke="#2b86a2" stroke-width="2" fill="none"/><path d="M4 0l3 5h-6zM16 13l-4-3v6zM14 3l-1 6-5-5z" fill="#2b86a2"/><circle cx="4" cy="13" r="3" fill="#2b86a2"/>',
}

const sep = { sep: true }
const close = { close: true }
const space = (size) => ({ space: size })
const pick = (...names) => names.map((icon) => ({ icon }))

const toolbarRows = [
  [
    [
      ...pick('model'), sep,
      ...pick('block', 'rapid', 'feeds', 'startPoint', 'leads', 'toolAxis', 'points', 'toolCalc'), sep,
      ...pick('toolpathCheck'), sep,
      ...pick('greenWave'), space(1),
      { combo: 'white', width: 193, value: '等高切面区域清除', mark: 'layers', name: '策略' },
      space(2), sep,
      ...pick('toolCollide', 'machineOk', 'calculator', 'ruler'), sep,
      ...pick('expand'), sep,
      ...pick('mirror'), close,
    ],
    [
      ...pick('redCross'), sep, ...pick('plane'), sep,
      { text: '孔' }, { text: '四' }, { text: '展' }, { text: '折' },
      ...pick('surface'), { text: '割' }, space(7), close,
    ],
  ],
  [
    [
      { combo: 'cool', width: 62, name: '刀具路径' }, space(0), ...pick('pyramid'), sep,
      ...pick('transform', 'waveCopy', 'waveCut', 'reorder', 'reverseTool', 'spinTool'),
      ...pick('refreshPath', 'list', 'copy', 'clock', 'deleteX'), sep,
      { icon: 'curves', on: true }, { icon: 'leadLinks', on: true }, { icon: 'arcs', on: true },
      ...pick('fourPoints', 'chain', 'axisEdit', 'fan', 'greenBars', 'redTrap', 'blueTrap'), sep,
      ...pick('searchPath', 'gauge', 'limits', 'stats'), close,
    ],
    [
      { icon: 'bear', on: true }, ...pick('axisTool'), sep, ...pick('sheet'), sep,
      { text: '圆' }, space(7), close,
    ],
  ],
  [
    [
      { combo: 'cool', width: 96, name: '刀具' }, space(10), ...pick('toolSet'), space(6),
      { combo: 'grey', width: 123, name: '刀具类型' }, space(9), ...pick('bulb'), sep, space(1),
      { combo: 'axis', width: 45, mark: 'numAxis', name: '坐标轴' }, space(2),
      ...pick('toStart', 'stepBack', 'play', 'stepOn', 'toEnd'), space(7),
      { slider: true }, space(21), sep,
      ...pick('docFire'), { icon: 'machineFire', on: true }, space(6), close,
    ],
  ],
  [
    [
      ...pick('swoosh'), space(0),
      { combo: 'grey', width: 121, name: '机床' }, space(2), ...pick('bulb'), sep,
      ...pick('machine'), sep, ...pick('axisBlock'), space(7),
      { combo: 'grey', width: 123, name: '用户坐标系' }, space(1), sep,
      ...pick('spinTool'), space(7), close,
    ],
  ],
]

const sideBars = [
  [
    ...pick('machine', 'viewTop', 'viewRight', 'viewFront', 'viewIso', 'zoomBack', 'refresh', 'zoomFit', 'zoomBox'),
    sep, ...pick('blockView'), sep,
    { icon: 'sphere', on: true }, ...pick('globe'), space(5), sep, space(2),
    ...pick('selectBox'), space(6), ...pick('undoSelect'), space(8), close,
  ],
  [
    { glyph: '删', tone: 'yellow' }, { glyph: '面', tone: 'yellow' }, { glyph: '优', tone: 'yellow' },
    { glyph: '头', tone: 'framed' }, { text: '残' },
    ...pick('unlock', 'palette', 'ring', 'ringPlus', 'cycleGreen', 'swapGreen'),
    { glyph: '垂', tone: 'framed heavy' },
    ...pick('leadLinks', 'arcs', 'bulb'), { text: '电' },
    ...pick('pinMove', 'xTool'), { text: '深' }, { text: '检' }, space(8), close,
  ],
]

const toolpath = (label, mark, extra) => ({ kind: 'leaf', status: 'ok', bulb: 'off', label, mark, ...extra })
const tool = (label, mark, extra) => ({ kind: 'leaf', bulb: 'off', label, mark, ...extra })

const tree = [
  { kind: 'group', label: 'NC程序' },
  { kind: 'group bold', label: '刀具路径' },
  { kind: 'program', label: 'O23(328X251X25-DM-FM-2PCS)' },
  { kind: 'program', label: 'O24(328X251X25-DM-ZM-2PCS)' },
  toolpath('FCR20-1', 'layers'),
  toolpath('6EM-1', 'stack'),
  toolpath('6EM-2', 'mesh', { bulb: 'on', active: true }),
  toolpath('6EM-3', 'stack'),
  toolpath('3R1.5', 'lines'),
  toolpath('6CT-2', 'star', { status: 'error' }),
  toolpath('8BR', 'drill'),
  { kind: 'group', label: '' },
  tool('FCR20', 'tipMill'),
  tool('6EM', 'endMill', { bulb: 'on', active: true }),
  tool('6CT', 'taper'),
  tool('3R1.5', 'ballMill'),
  tool('8BR', 'endMill'),
  tool('8EM', 'endMill'),
  { kind: 'group', label: '' },
  { kind: 'group', label: '参考线' },
  { kind: 'group', label: '孔特征设置' },
  { kind: 'group', label: '产品组' },
  { kind: 'group bold', label: '用户坐标系' },
  tool('FM', 'plane'),
  tool('ZM', 'plane', { bulb: 'ray', active: true }),
]

const macros = [
  '【2D】', '刀:6', '残留', 'S:6000', '', '修圆', '', '轮廓', '', '', '　行',
  '', '', '平行', '', '', '斜向', '', '抬刀', '时间',
]

const holes = [
  { x: 581, y: 257 },
  { x: 519, y: 289 },
  { x: 539, y: 415 },
  { x: 858, y: 261 },
]

const passes = 50
const rasterPath = Array.from({ length: passes }, (_, i) => {
  const t = i / (passes - 1)
  const left = 528 + 28 * t
  const right = 924 + 27 * t
  return `M${left.toFixed(1)} ${(270.5 + 167 * t).toFixed(1)}L${right.toFixed(1)} ${(276.5 + 167 * t).toFixed(1)}`
}).join('')

const slotPath = [0, 1, 2, 3, 4, 5].map((i) => {
  const y = 445 + i * 3.5
  return `M594 ${y}L632 ${y + 1}M881 ${y + 3}L921 ${y + 4}`
}).join('') + 'M594 445V463M632 446V457M882 448V468M920 450V462'
</script>

<style>
body {
  overflow: hidden;
  background: #f0f0f0;
}
</style>

<style scoped>
.window {
  display: flex;
  flex-direction: column;
  min-height: 100vh;
  margin-left: -40px;
  color: #000;
  background: #f0f0f0;
  font-family: "DejaVu Sans Condensed", "Noto Sans CJK SC", sans-serif;
  font-size: 12px;
}

.window * {
  box-sizing: border-box;
}

button {
  flex: none;
  padding: 0;
  border: none;
  color: inherit;
  background: transparent;
  font: inherit;
}

svg {
  display: block;
}

i {
  flex: none;
}

.title-bar {
  display: flex;
  height: 19px;
  overflow: hidden;
  color: #fff;
  background: #0e456a;
  line-height: 8px;
  white-space: pre;
}

.title-project {
  margin-left: 16px;
}

.minimize {
  width: 10px;
  height: 1px;
  margin: 4px 26px 0 auto;
  background: #fff;
}

.menu-bar {
  display: flex;
  gap: 16px;
  height: 21px;
  padding: 0 0 2px 30px;
  border-bottom: 1px solid #a0a0a0;
  background: linear-gradient(#fff 18px, #f0f0f0 18px);
}

.toolbar-row {
  display: flex;
  height: 30px;
}

.toolbar-row:nth-of-type(4) {
  border-bottom: 1px solid #a0a0a0;
}

.toolbar {
  display: flex;
  flex: none;
  gap: 1px;
  align-items: center;
  height: 30px;
  padding: 0 4px 0 3px;
  border-right: 1px solid #a0a0a0;
  border-bottom: 1px solid #a0a0a0;
  box-shadow: inset 0 1px #fff;
}

.toolbar:first-child {
  padding-left: 31px;
}

.tool {
  width: 24px;
  height: 24px;
}

.tool svg {
  width: 24px;
  height: 24px;
}

.tool.is-on {
  background: #c2dcf3;
  box-shadow: inset 0 0 0 1px #8fc3ee;
}

.sep {
  width: 9px;
  height: 23px;
  background: linear-gradient(90deg, transparent 4px, #a0a0a0 4px, #a0a0a0 5px, #fff 5px, #fff 6px, transparent 6px);
}

.text-tool {
  width: 35px;
  height: 22px;
  margin: 1px;
  border: 1px solid #adadad;
  background: #e1e1e1;
  line-height: 20px;
}

.close {
  width: 14px;
  height: 14px;
  background: #fff;
}

.close svg {
  width: 14px;
  height: 14px;
}

.combo {
  display: grid;
  flex: none;
  grid-template-columns: auto 1fr 17px;
  align-items: center;
  height: 20px;
  background: #e1e1e1;
}

.combo select {
  grid-row: 1;
  grid-column: 2 / 4;
  width: 100%;
  height: 20px;
  padding: 0;
  border: none;
  appearance: none;
  background: transparent;
  font: inherit;
}

.combo .chevron {
  grid-row: 1;
  grid-column: 3;
  width: 10px;
  height: 6px;
  margin-left: 4px;
  pointer-events: none;
}

.chevron path,
.scrollbar path {
  fill: none;
  stroke: #505050;
}

.combo-mark {
  grid-row: 1;
  grid-column: 1;
  width: 24px;
  height: 24px;
}

.combo-cool {
  background: #e1e5ea;
}

.combo-white,
.combo-axis {
  height: 24px;
  background: #fff;
}

.combo-white {
  padding-left: 2px;
}

.combo-white select {
  background: linear-gradient(90deg, #f0f0f0 calc(100% - 19px), transparent 0);
}

.slider {
  width: 71px;
  height: 22px;
  margin: 0;
  appearance: none;
  background: transparent;
}

.slider::-webkit-slider-runnable-track {
  height: 4px;
  border: 1px solid #d0d0d0;
  background: #e7eaea;
}

.slider::-webkit-slider-thumb {
  width: 10px;
  height: 20px;
  margin-top: -9px;
  appearance: none;
  background: #0078d7;
}

.workspace {
  display: flex;
  flex: 1;
  min-height: 0;
}

.explorer {
  display: flex;
  flex: none;
  flex-direction: column;
  width: 285px;
  margin-right: 8px;
  padding-bottom: 4px;
}

.explorer-head {
  display: flex;
  gap: 2px;
  align-items: center;
  height: 19px;
  padding-top: 2px;
  border-bottom: 1px solid #696969;
}

.grip {
  flex: 1;
  height: 7px;
  margin-right: 1px;
  border-right: 1px solid #a0a0a0;
  background: linear-gradient(#fff 1px, #a0a0a0 1px, #a0a0a0 2px, transparent 2px, transparent 4px, #fff 4px, #fff 5px, #a0a0a0 5px, #a0a0a0 6px, transparent 6px);
}

.dock {
  width: 12px;
  height: 12px;
  background: #fff;
}

.dock svg {
  width: 12px;
  height: 12px;
  fill: none;
  stroke: #6c7c8c;
}

.dock .cross {
  stroke-width: 2;
}

.explorer-tools {
  height: 36px;
  padding: 4px 0 0 48px;
  border-bottom: 1px solid #a0a0a0;
}

.bin-button {
  display: grid;
  place-items: center;
  width: 35px;
  height: 31px;
  border: 1px solid #dcdcdc;
  background: #eaeaea;
}

.bin-button svg {
  width: 22px;
  height: 22px;
}

.tree-frame {
  display: flex;
  flex: 1;
  margin-top: 3px;
  border: 1px solid #a0a0a0;
  border-color: #a0a0a0 #e3e3e3 #e3e3e3;
  background: #fff;
}

.tree {
  flex: 1;
  margin: 0;
  padding: 19px 0 0;
  list-style: none;
}

.tree li {
  display: flex;
  gap: 4px;
  align-items: center;
  height: 18px;
  line-height: 18px;
  white-space: pre;
}

.tree .group {
  padding-left: 15px;
}

.tree .program {
  padding-left: 39px;
}

.tree .leaf {
  padding-left: 31px;
}

.tree .bold,
.tree b {
  font-weight: bold;
}

.status-mark,
.node-mark {
  flex: none;
  width: 16px;
  height: 16px;
}

.bulb-mark {
  flex: none;
  width: 10px;
  height: 16px;
}

.scrollbar {
  display: flex;
  flex-direction: column;
  width: 16px;
  background: #f0f0f0;
}

.scrollbar button {
  display: grid;
  place-items: center;
  height: 17px;
}

.scrollbar svg {
  width: 10px;
  height: 6px;
}

.scrollbar path {
  stroke-width: 2;
}

.scroll-up {
  margin-bottom: 14px;
}

.scroll-thumb {
  flex: 353;
  background: #cdcdcd;
}

.scroll-rest {
  flex: 68;
}

.side-bars {
  display: flex;
  flex: none;
  align-items: flex-start;
  border-left: 1px solid #a0a0a0;
}

.side-bar {
  display: flex;
  flex-direction: column;
  align-items: flex-start;
  padding: 3px 2px 2px 3px;
  border-bottom: 1px solid #a0a0a0;
  box-shadow: inset 1px 0 #fff;
}

.side-0 {
  width: 29px;
}

.side-1 {
  width: 44px;
  border-left: 1px solid #a0a0a0;
}

.side-bar .close {
  margin-left: 1px;
}

.sep-line {
  width: 24px;
  height: 9px;
  background: linear-gradient(transparent 4px, #a0a0a0 4px, #a0a0a0 5px, #fff 5px, #fff 6px, transparent 6px);
}

.glyph-tool {
  width: 24px;
  height: 24px;
  color: #f00;
  font-size: 18px;
  font-weight: bold;
  line-height: 22px;
}

.yellow {
  background: #ffc;
  font-family: "Noto Sans CJK SC", sans-serif;
  line-height: 21px;
}

.framed {
  border: 1px solid #dcdce6;
  background: #f6f6f6;
  font-weight: normal;
}

.heavy {
  font-size: 20px;
  font-weight: bold;
}

.viewport {
  position: relative;
  flex: 1;
  min-width: 0;
  border-top: 1px solid #6b6b6b;
  background: linear-gradient(#2e485c, #000 96%);
}

.scene {
  position: absolute;
  inset: 0;
  width: 100%;
  height: 100%;
}

.engraving {
  font-size: 11px;
  font-weight: bold;
}

.latin {
  font-family: "Liberation Serif", serif;
  font-size: 10px;
}

.axis {
  font-size: 12px;
}

.wide {
  font-size: 13px;
}

.red {
  fill: #f00;
}

.cyan {
  fill: #0ff;
}

.cube-text {
  fill: #68757f;
  font-size: 16px;
}

.macro-panel {
  flex: none;
  width: 24px;
  padding: 3px 0 0 4px;
  overflow: hidden;
  border-left: 1px solid #fff;
}

.macro-list {
  width: 60px;
  margin-left: -1px;
}

.macro-list button {
  display: block;
  width: 60px;
  height: 24px;
  padding-left: 4px;
  border: 1px solid #808080;
  box-shadow: inset 0 0 0 1px #fff;
  line-height: 20px;
  text-align: left;
  white-space: nowrap;
}

.macro-panel .close {
  margin-top: 8px;
}

.status-bar {
  height: 27px;
  padding-left: 19px;
  border-top: 1px solid #a0a0a0;
  line-height: 30px;
}
</style>
